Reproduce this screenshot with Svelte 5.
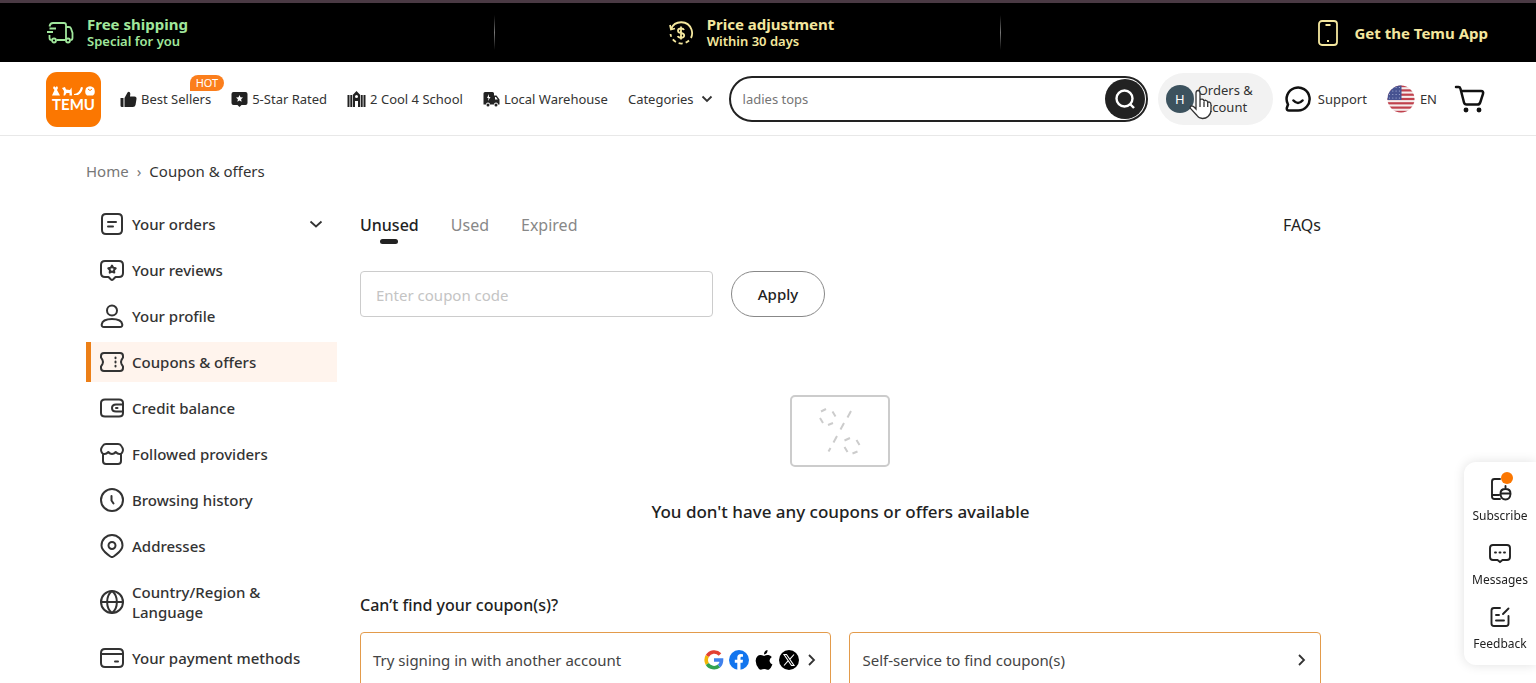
<!--
  Coupons & offers: account page with promo banner, site header,
  account sidebar, coupon tabs and floating shortcuts.
-->
<script lang="ts">
	interface MenuItem {
		label: string;
		paths: string[];
		expandable?: boolean;
	}

	const menu: MenuItem[] = [
		{
			label: 'Your orders',
			expandable: true,
			paths: ['M6 2H18Q22 2 22 6V18Q22 22 18 22H6Q2 22 2 18V6Q2 2 6 2Z', 'M8 10H16', 'M8 14.5H13']
		},
		{
			label: 'Your reviews',
			paths: [
				'M5 3H19Q23 3 23 7V15Q23 19 19 19H15.5L13 21.5Q12 22.4 11 21.5L8.5 19H5Q1 19 1 15V7Q1 3 5 3Z',
				'M12 7.6L13.2 9.8L15.7 10.3L14 12.1L14.3 14.6L12 13.5L9.7 14.6L10 12.1L8.3 10.3L10.8 9.8Z'
			]
		},
		{
			label: 'Your profile',
			paths: ['M12 1.5A5 5 0 1 1 12 11.5A5 5 0 1 1 12 1.5Z', 'M4 23H20Q22.5 23 22.3 20.5C21.8 17 18 15 12 15C6 15 2.2 17 1.7 20.5Q1.5 23 4 23Z']
		},
		{
			label: 'Coupons & offers',
			paths: [
				'M4 3H20Q23 3 23 6V7.5L21.5 10Q20.5 12 21.5 14L23 16.5V18Q23 21 20 21H4Q1 21 1 18V16.5L2.5 14Q3.5 12 2.5 10L1 7.5V6Q1 3 4 3Z',
				'M15.5 7.5V8.3M15.5 11.6V12.4M15.5 15.7V16.5'
			]
		},
		{
			label: 'Credit balance',
			paths: ['M5 3.5H19Q23 3.5 23 7V17Q23 20.5 19 20.5H5Q1 20.5 1 17V7Q1 3.5 5 3.5Z', 'M23 8.5H16Q12 8.5 12 12Q12 15.5 16 15.5H23', 'M16 12H17.5']
		},
		{
			label: 'Followed providers',
			paths: [
				'M6 2H18Q20 2 21 3.5Q23 6 23 8Q22.5 12 19.5 12Q17.5 12 15.7 10Q14 12 12 12Q10 12 8.3 10Q6.5 12 4.5 12Q1.5 12 1 8Q1 6 3 3.5Q4 2 6 2Z',
				'M3 12.5V19Q3 22 6 22H18Q21 22 21 19V12.5'
			]
		},
		{
			label: 'Browsing history',
			paths: ['M12 1A11 11 0 1 1 12 23A11 11 0 1 1 12 1Z', 'M11.5 8V12.5L13.5 15.5']
		},
		{
			label: 'Addresses',
			paths: ['M12 1A10.5 10.5 0 0 1 22.5 11.5C22.5 17 17 19.5 14 22.3Q12 23.8 10 22.3C7 19.5 1.5 17 1.5 11.5A10.5 10.5 0 0 1 12 1Z', 'M12 8A3.5 3.5 0 1 1 12 15A3.5 3.5 0 1 1 12 8Z']
		},
		{
			label: 'Country/Region & Language',
			paths: ['M12 1A11 11 0 1 1 12 23A11 11 0 1 1 12 1Z', 'M1 12H23', 'M12 1C5.5 6 5.5 18 12 23', 'M12 1C18.5 6 18.5 18 12 23']
		},
		{
			label: 'Your payment methods',
			paths: ['M5 3H19Q23 3 23 7V17Q23 21 19 21H5Q1 21 1 17V7Q1 3 5 3Z', 'M1 8H23', 'M15 15.5H18']
		}
	];

	const tabs = ['Unused', 'Used', 'Expired'];

	let activeTab = $state('Unused');
	let activeItem = $state('Coupons & offers');
	let search = $state('');
	let code = $state('');
</script>

{#snippet chevron(d: string)}
	<svg class="chevron" viewBox="0 0 14 14" aria-hidden="true"><path {d} /></svg>
{/snippet}

<div class="page">
	<div class="banner">
		<a class="promo green" href="#shipping">
			<svg width="28" height="24" viewBox="0 0 28 24" aria-hidden="true">
				<path d="M3.5 5.500Q4 2 7 2H18Q20 2 20 4V19M20 6H23Q24.500 6 25 7.500L26.500 12V17Q26.500 19 24.500 19M10.500 19H19.500M3.500 14V17Q3.500 19 5.500 19M3.500 7.500H10M1 11H7" />
				<circle cx="8" cy="19.500" r="2" /><circle cx="22" cy="19.500" r="2" />
			</svg>
			<span><strong>Free shipping</strong><small>Special for you</small></span>
		</a>
		<a class="promo middle" href="#price">
			<svg width="26" height="26" viewBox="0 0 26 26" aria-hidden="true">
				<path d="M3 9A11 11 0 0 1 23.5 9.5A11 11 0 0 1 23 18M2 5L3 9.5L7 8.5" />
				<path d="M21 20.5A11 11 0 0 1 2.5 14" stroke-dasharray="4 3" />
				<path d="M16 10Q15.5 8.5 13 8.5Q10 8.5 10 10.7Q10 12.6 13 13Q16.2 13.5 16.2 15.5Q16.2 17.7 13 17.7Q10.3 17.7 9.8 16M13 6.5V19.5" />
			</svg>
			<span><strong>Price adjustment</strong><small>Within 30 days</small></span>
		</a>
		<a class="promo app" href="#app">
			<svg width="20" height="26" viewBox="0 0 20 26" aria-hidden="true">
				<rect x="1" y="1" width="18" height="24" rx="3" /><path d="M7.5 5H12.5M9 21H11" />
			</svg>
			<strong>Get the Temu App</strong>
		</a>
	</div>

	<header>
		<a class="logo" href="#home" aria-label="Temu">
			<svg width="44" height="10" viewBox="0 0 44 10" aria-hidden="true">
				<path d="M2 0L3.5 1.5L5 0L6 2L5 4L8 9.5H0L2.5 4L1 2Z" />
				<path d="M10 2L13 1L14 3.5L18 4L19.5 1.5L20 9.5H17.5V7H14.5L13 9.5H11.5L12 5Z" />
				<path d="M22 8Q27 8 29 1L31 1.5Q30 7 26 9H22Z" />
				<path d="M34 2Q38 -1.5 42 2Q44 8 41 9.5H35Q32 8 34 2Z" />
				<path class="smile" d="M36 3Q38 6 40 3" />
			</svg>
			<b>TEMU</b>
		</a>
		<nav aria-label="Shop">
			<a href="#best">
				<svg viewBox="0 0 17 17" aria-hidden="true"><path d="M0.5 7H3.5V16H2Q0.5 16 0.5 14.5ZM4.5 7L7.5 1.5Q8.5 0 9.8 1.2Q10.8 2.2 10 5.5H14.5Q16.8 5.5 16.5 8L15.5 14Q15 16 13 16H4.5Z" /></svg>
				Best Sellers<em>HOT</em>
			</a>
			<a href="#rated">
				<svg viewBox="0 0 17 17" aria-hidden="true"><path fill-rule="evenodd" d="M2.5 1H14.5Q16.5 1 16.5 3V12Q16.5 14 14.5 14H10.5L8.5 16L6.5 14H2.5Q0.5 14 0.5 12V3Q0.5 1 2.5 1ZM8.5 4L7.5 6.3L5 6.6L6.9 8.3L6.4 10.7L8.5 9.5L10.6 10.7L10.1 8.3L12 6.6L9.5 6.3Z" /></svg>
				5-Star Rated
			</a>
			<a href="#school">
				<svg viewBox="0 0 19 17" aria-hidden="true"><path fill-rule="evenodd" d="M0.5 4H2.5V16H0.5ZM3.3 4H5V16H3.3ZM14 4H15.7V16H14ZM16.5 4H18.5V16H16.5ZM9.5 0L13.3 4V16H11V10H8V16H5.7V4ZM9.5 4A1.5 1.5 0 1 0 9.5 7A1.5 1.5 0 1 0 9.5 4Z" /></svg>
				2 Cool 4 School
			</a>
			<a href="#local">
				<svg viewBox="0 0 17 17" aria-hidden="true"><path fill-rule="evenodd" d="M2 1H9.5Q11 1 11 2.5V4.5H13.5L16.5 8.5V13.5H15A2 2 0 0 0 11 13.5H7A2 2 0 0 0 3 13.5H0.5V2.5Q0.5 1 2 1ZM6 3L4 7H5.5L5 10L7.5 6H6ZM12 6V8.5H14.8L13 6Z" /><circle cx="5" cy="14" r="1.5" /><circle cx="13" cy="14" r="1.5" /></svg>
				Local Warehouse
			</a>
			<a class="categories" href="#categories">Categories {@render chevron('M2.5 4.5L7 9L11.5 4.5')}</a>
		</nav>
		<form class="search" role="search">
			<input type="search" aria-label="Search" placeholder="ladies tops" bind:value={search} />
			<button type="button" aria-label="Search">
				<svg width="24" height="24" viewBox="0 0 24 24" aria-hidden="true"><circle cx="11.5" cy="11.5" r="8" /><path d="M17.5 17.5L21 21" /></svg>
			</button>
		</form>
		<a class="account" href="#account">
			<i>H</i>
			<span>Orders &amp;<br />Account</span>
			<svg class="pointer" width="26" height="32" viewBox="0 0 26 32" aria-hidden="true">
				<path d="M8 20V4Q8 1.5 10 1.5Q12 1.5 12 4V12Q12 10 14 10.2Q16 10.4 16 12.5Q16.5 11 18 11.3Q19.7 11.6 19.7 13.5Q20.5 12.7 21.6 13.2Q23 13.7 23 16V21Q23 25 20 27.5Q18 29.5 14.5 29.5Q11 29.5 9 26.5L2.5 19.5Q1.5 17.5 3.5 17Q5 16.7 8 20ZM12 12V18M16 13V18M19.7 14V18" />
			</svg>
		</a>
		<a class="tool" href="#support">
			<svg width="26" height="26" viewBox="0 0 26 26" aria-hidden="true"><path d="M4 24.5H13A11.5 11.5 0 1 0 3 18.5L1.8 22Q1.5 24.5 4 24.5ZM8.5 14.5Q13 19.5 17.5 14.5" /></svg>
			Support
		</a>
		<a class="tool language" href="#language">
			<svg width="28" height="28" viewBox="0 0 28 28" aria-hidden="true">
				<clipPath id="flag-disc"><circle cx="14" cy="14" r="13.5" /></clipPath>
				<g clip-path="url(#flag-disc)">
					<rect width="28" height="28" fill="#f5eeee" />
					{#each [0, 1, 2, 3, 4, 5, 6] as stripe}
						<rect y={stripe * 4.3} width="28" height="2.2" fill="#c0414d" />
					{/each}
					<rect width="14.5" height="15" fill="#475391" />
					{#each [0, 1, 2, 3] as row}
						{#each [0, 1, 2, 3] as col}
							<circle cx={2.5 + col * 3.3} cy={2.5 + row * 3.5} r="0.6" fill="#aeb5d8" />
						{/each}
					{/each}
				</g>
			</svg>
			EN
		</a>
		<a class="cart" href="#cart" aria-label="Cart">
			<svg width="32" height="30" viewBox="0 0 32 30" aria-hidden="true">
				<path d="M2 3H4.5Q6 3 6.4 4.5L10 18.5Q10.5 20.5 12.5 20.5H23.5Q25.5 20.5 26.2 18.5L29 10Q29.8 7 27 7H7.2" /><circle cx="12" cy="26" r="1.2" /><circle cx="25" cy="26" r="1.2" />
			</svg>
		</a>
	</header>

	<main>
		<nav class="crumbs" aria-label="Breadcrumb">
			<a href="#home">Home</a><span>›</span><b>Coupon &amp; offers</b>
		</nav>

		<div class="columns">
			<nav class="sidebar" aria-label="Account">
				{#each menu as item (item.label)}
					<a
						href="#menu"
						class:active={item.label === activeItem}
						onclick={() => (activeItem = item.label)}
					>
						<svg width="24" height="24" viewBox="0 0 24 24" aria-hidden="true">
							{#each item.paths as d}
								<path {d} />
							{/each}
						</svg>
						<span>{item.label}</span>
						{#if item.expandable}
							{@render chevron('M1.5 4.5L7 9.5L12.5 4.5')}
						{/if}
					</a>
				{/each}
			</nav>

			<section class="content">
				<div class="tabs">
					{#each tabs as tab}
						<button class:active={tab === activeTab} onclick={() => (activeTab = tab)}>{tab}</button>
					{/each}
					<a href="#faqs">FAQs</a>
				</div>

				<div class="redeem">
					<input type="text" aria-label="Coupon code" placeholder="Enter coupon code" bind:value={code} />
					<button>Apply</button>
				</div>

				<div class="empty">
					<svg width="100" height="72" viewBox="0 0 100 72" aria-hidden="true">
						<rect x="1" y="1" width="98" height="70" rx="4" />
						<path d="M61 16L57.5 22.5M54 28L50.5 34.5M47 41L43.5 47.5M40.5 53L38.5 56.5" />
						<path d="M31 16.5L36 14M42.5 16.5L45.5 21.5M43 28L38 30M33 28L30 23" />
						<path d="M54.5 45.5L60 43M66.5 45L69.5 50M67.5 56.5L62.5 58.5M57.5 57L54.5 52" />
					</svg>
					<p>You don't have any coupons or offers available</p>
				</div>

				<h2>Can’t find your coupon(s)?</h2>
				<div class="cards">
					<a href="#signin">
						<span>Try signing in with another account</span>
						<svg width="20" height="20" viewBox="0 0 20 20" aria-hidden="true">
							<g fill="none" stroke-width="3.6">
								<path stroke="#e34133" d="M3.3 6A8 8 0 0 1 16 4.5" />
								<path stroke="#f3b605" d="M3.3 6A8 8 0 0 0 3.3 14" />
								<path stroke="#32a350" d="M3.3 14A8 8 0 0 0 15 16" />
								<path stroke="#4081ec" d="M15 16Q17.5 14 17.5 10H10" />
							</g>
						</svg>
						<svg width="20" height="20" viewBox="0 0 20 20" aria-hidden="true">
							<circle cx="10" cy="10" r="10" fill="#1275ee" />
							<path fill="#fff" d="M8.3 20V12.7H5.8V9.7H8.3V7.5Q8.3 4 12 4L14 4.2V6.8H12.6Q11.5 6.8 11.5 8V9.7H14L13.6 12.7H11.5V20Z" />
						</svg>
						<svg width="20" height="20" viewBox="0 0 20 20" aria-hidden="true">
							<path d="M13.5 0Q13.8 3.8 10 4.5Q9.8 1 13.5 0ZM10 6Q12.5 4.5 14.5 5Q16.5 5.3 17.8 7Q15 9 15.7 11.5Q16.2 13.7 18.4 14.6Q17 18.5 14.8 19.7Q13.5 20.1 12 19.3Q10.3 18.6 8.5 19.3Q6.5 20.3 5 19Q1.5 15 1.7 10.5Q2.2 5.8 6 5.1Q8 5 10 6Z" />
						</svg>
						<svg width="20" height="20" viewBox="0 0 20 20" aria-hidden="true">
							<circle cx="10" cy="10" r="10" />
							<path fill="none" stroke="#fff" stroke-width="1.1" d="M5 4.5H7.5L15 15.5H12.5ZM15 4.5L10.7 9.3M9.3 10.7L5 15.5" />
						</svg>
						{@render chevron('M5 2L10 7L5 12')}
					</a>
					<a href="#selfservice">
						<span>Self-service to find coupon(s)</span>
						{@render chevron('M5 2L10 7L5 12')}
					</a>
				</div>
			</section>
		</div>
	</main>

	<aside>
		<a href="#subscribe">
			<svg width="24" height="24" viewBox="0 0 24 24" aria-hidden="true"><path d="M12 2H6.5Q4 2 4 4.5V19.5Q4 22 6.5 22H12M4 18H11M17.5 9V11M12.5 16.5Q12.5 12 17.5 12Q22.5 12 22.5 16.5ZM12.5 17Q13 22.5 17.5 22.5Q22 22.5 22.5 17" /></svg>
			<i class="dot"></i>
			Subscribe
		</a>
		<a href="#messages">
			<svg width="24" height="24" viewBox="0 0 24 24" aria-hidden="true"><path d="M5 4H19Q22 4 22 7V16Q22 19 19 19H14.5L12 21L9.5 19H5Q2 19 2 16V7Q2 4 5 4ZM7 11.5H8M11.5 11.5H12.5M16 11.5H17" /></svg>
			Messages
		</a>
		<a href="#feedback">
			<svg width="24" height="24" viewBox="0 0 24 24" aria-hidden="true"><path d="M12 3H6Q3.5 3 3.5 5.5V18.5Q3.5 21 6 21H18Q20.5 21 20.5 18.5V11M8 10H11M8 15.5H16M15 9L20.5 3.5" /></svg>
			Feedback
		</a>
	</aside>
</div>

<style>
	:global(body) {
		font-family: 'Noto Sans', 'Open Sans', sans-serif;
		color: #222;
		background: #fff;
	}

	.page {
		height: 100vh;
		box-sizing: border-box;
		overflow: hidden;
		border-top: 3px solid #4a3a44;
	}

	a {
		color: inherit;
		text-decoration: none;
	}

	button,
	input {
		font: inherit;
		color: inherit;
		box-sizing: border-box;
	}

	svg {
		flex: none;
	}

	.chevron {
		width: 14px;
		height: 14px;
		fill: none;
		stroke: #333;
		stroke-width: 1.8;
	}

	/* Promo banner */
	.banner {
		display: grid;
		grid-template-columns: 32.2% 33% 1fr;
		height: 59px;
		background: #000;
	}

	.promo {
		position: relative;
		display: flex;
		align-items: center;
		gap: 13px;
		color: #f4e79e;
	}

	.promo:not(.app)::after {
		content: '';
		position: absolute;
		right: 0;
		top: 12px;
		bottom: 12px;
		width: 1px;
		background: linear-gradient(transparent, #777, transparent);
	}

	.promo svg {
		fill: none;
		stroke: currentColor;
		stroke-width: 1.8;
	}

	.promo span {
		display: flex;
		flex-direction: column;
	}

	.promo strong {
		font-size: 15px;
		line-height: 18px;
	}

	.promo small {
		font-size: 13px;
		font-weight: 600;
		line-height: 17px;
	}

	.green {
		padding-left: 46px;
		color: #a0e79c;
	}

	.middle {
		justify-content: center;
		padding-left: 6px;
	}

	.app {
		justify-content: flex-end;
		gap: 16px;
		padding-right: 48px;
	}

	/* Header */
	header {
		display: flex;
		align-items: center;
		height: 72px;
		padding: 1px 50px 0 46px;
		border-bottom: 1px solid #e8e8e8;
		font-size: 13px;
		color: #333;
		white-space: nowrap;
	}

	.logo {
		display: flex;
		flex-direction: column;
		align-items: center;
		justify-content: center;
		width: 55px;
		height: 55px;
		border-radius: 11px;
		background: #fb7701;
		color: #fff;
		fill: #fff;
	}

	.logo b {
		font: 700 15px/16px Lato, sans-serif;
	}

	.smile {
		fill: none;
		stroke: #fb7701;
	}

	header nav {
		display: flex;
		gap: 20px;
		margin: 0 15px 0 19px;
	}

	header nav a {
		position: relative;
		display: flex;
		align-items: center;
		gap: 4px;
		fill: #222;
	}

	header nav svg:not(.chevron) {
		height: 17px;
	}

	.categories {
		gap: 6px;
	}

	em {
		position: absolute;
		right: -13px;
		top: -15px;
		padding: 0 6px;
		border-radius: 8px 8px 8px 0;
		background: #fb7e1c;
		color: #fff;
		font-size: 11px;
		font-style: normal;
		line-height: 16px;
	}

	.search {
		display: flex;
		flex: 1;
		min-width: 0;
		height: 46px;
		box-sizing: border-box;
		padding: 1px;
		border: 2px solid #222;
		border-radius: 23px;
	}

	.search input {
		flex: 1;
		min-width: 0;
		padding: 0 11px;
		border: 0;
		border-radius: 20px;
		background: none;
		outline: 0;
	}

	.search input::placeholder {
		color: #757575;
	}

	.search button {
		display: grid;
		place-items: center;
		width: 40px;
		padding: 0;
		border: 0;
		border-radius: 20px;
		background: #222;
	}

	.search svg {
		fill: none;
		stroke: #fff;
		stroke-width: 2.4;
	}

	.account {
		position: relative;
		display: flex;
		align-items: center;
		gap: 4px;
		height: 52px;
		box-sizing: border-box;
		margin-left: 10px;
		padding: 0 20px 0 8px;
		border-radius: 26px;
		background: #f2f2f2;
		line-height: 17px;
	}

	.account i {
		width: 28px;
		border-radius: 14px;
		background: #3c525e;
		color: #fff;
		font-style: normal;
		line-height: 28px;
		text-align: center;
	}

	.pointer {
		position: absolute;
		left: 30px;
		top: 16px;
		fill: #fff;
		stroke: #333;
		stroke-width: 1.3;
	}

	.tool {
		display: flex;
		align-items: center;
		gap: 7px;
		margin-left: 12px;
	}

	.tool > svg:not(.language svg),
	.cart svg {
		fill: none;
		stroke: #111;
		stroke-width: 2.5;
		stroke-linecap: round;
	}

	.language {
		gap: 5px;
		margin-left: 20px;
	}

	.cart {
		display: flex;
		margin-left: 17px;
	}

	/* Page body */
	main {
		padding: 25px 14% 0 86px;
	}

	.crumbs {
		display: flex;
		gap: 8px;
		font-size: 15px;
		line-height: 20px;
		color: #777;
	}

	.crumbs b {
		color: #333;
		font-weight: 400;
	}

	.columns {
		display: flex;
		gap: 23px;
		margin-top: 23px;
	}

	.sidebar {
		display: flex;
		flex: none;
		flex-direction: column;
		gap: 6px;
		width: 251px;
	}

	.sidebar a {
		display: flex;
		align-items: center;
		gap: 8px;
		box-sizing: border-box;
		padding: 10px 14px 10px 9px;
		border-left: 5px solid transparent;
		font-size: 15px;
		font-weight: 500;
		line-height: 20px;
		color: #333;
	}

	.sidebar a.active {
		border-color: #ec7f17;
		background: #fff4ed;
	}

	.sidebar svg:not(.chevron) {
		margin: -2px 0;
		fill: none;
		stroke: #333;
		stroke-width: 2;
		stroke-linecap: round;
		stroke-linejoin: round;
	}

	.sidebar span {
		flex: 1;
	}

	.content {
		flex: 1;
		min-width: 0;
	}

	.tabs {
		display: flex;
		gap: 32px;
		padding-top: 10px;
		font-size: 16px;
		line-height: 22px;
	}

	.tabs button {
		position: relative;
		padding: 0;
		border: 0;
		background: none;
		color: #888;
	}

	.tabs button.active {
		color: #222;
		font-weight: 500;
	}

	.tabs button.active::after {
		content: '';
		position: absolute;
		left: 50%;
		bottom: -8px;
		width: 18px;
		height: 5px;
		margin-left: -9px;
		border-radius: 3px;
		background: #222;
	}

	.tabs a {
		margin-left: auto;
	}

	.redeem {
		display: flex;
		gap: 18px;
		margin-top: 35px;
	}

	.redeem input {
		width: 353px;
		height: 46px;
		padding: 2px 15px 0;
		border: 1px solid #ccc;
		border-radius: 4px;
		font-size: 15px;
	}

	.redeem input::placeholder {
		color: #c4c4c4;
	}

	.redeem button {
		width: 94px;
		border: 1px solid #888;
		border-radius: 23px;
		background: #fff;
		font-size: 15px;
		font-weight: 500;
	}

	.empty {
		display: flex;
		flex-direction: column;
		align-items: center;
		gap: 33px;
		margin-top: 78px;
	}

	.empty svg {
		fill: none;
		stroke: #ccc;
		stroke-width: 2;
	}

	.empty p {
		margin: 0;
		font-size: 17px;
		font-weight: 500;
		line-height: 24px;
	}

	h2 {
		margin: 69px 0 15px;
		font-size: 16px;
		font-weight: 500;
		line-height: 24px;
	}

	.cards {
		display: grid;
		grid-template-columns: 1fr 1fr;
		gap: 18px;
	}

	.cards a {
		display: flex;
		align-items: center;
		gap: 5px;
		padding: 17px 12px 40px;
		border: 1px solid #e39b4b;
		border-radius: 4px;
		font-size: 15px;
		line-height: 20px;
		color: #444;
	}

	.cards span {
		flex: 1;
	}

	/* Floating shortcuts */
	aside {
		position: fixed;
		right: 0;
		bottom: 18px;
		display: flex;
		flex-direction: column;
		gap: 17px;
		width: 72px;
		padding: 15px 0 13px;
		border-radius: 12px 0 0 12px;
		background: #fff;
		box-shadow: 0 0 12px rgba(0, 0, 0, 0.12);
		font-size: 12px;
		line-height: 16px;
	}

	aside a {
		position: relative;
		display: flex;
		flex-direction: column;
		align-items: center;
		gap: 7px;
	}

	aside svg {
		width: 24px;
		fill: none;
		stroke: #222;
		stroke-width: 1.9;
		stroke-linecap: round;
	}

	.dot {
		position: absolute;
		right: 23px;
		top: -5px;
		width: 12px;
		height: 12px;
		border-radius: 50%;
		background: #fb7701;
	}
</style>
